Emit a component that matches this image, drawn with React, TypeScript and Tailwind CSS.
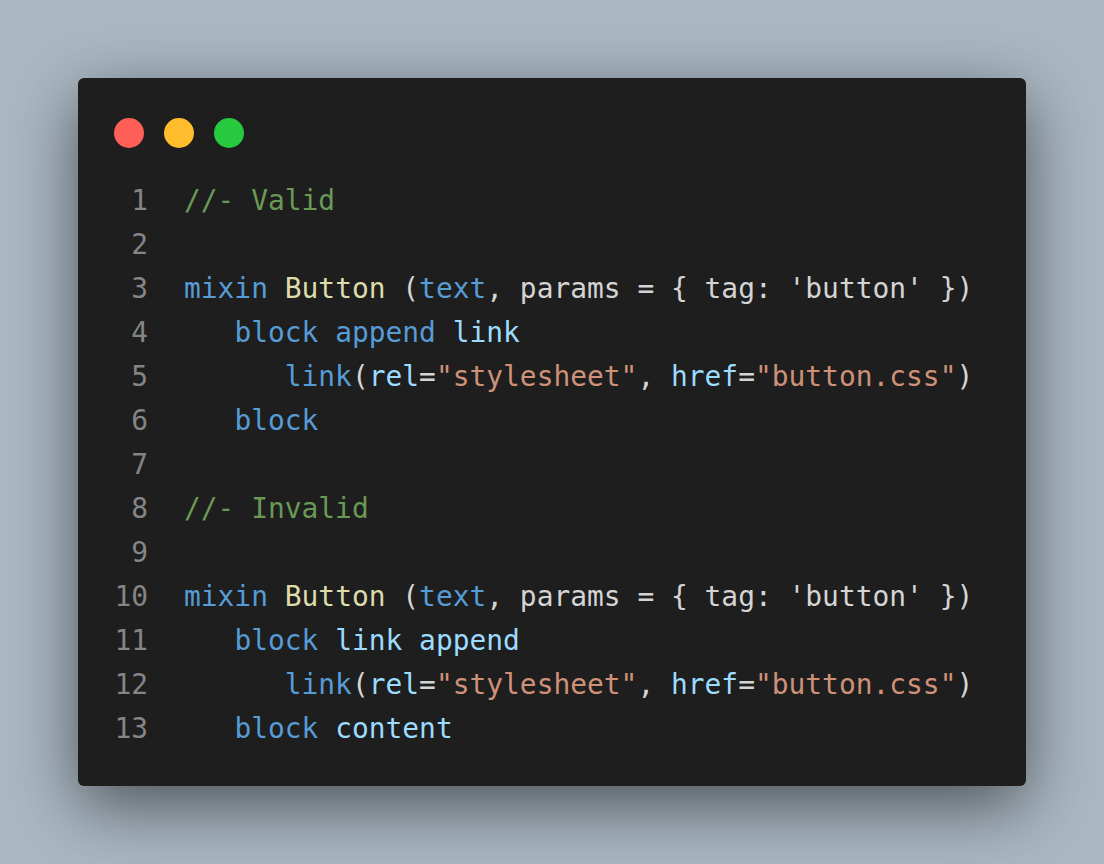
import React from "react";

type Tok = [string, string];

const K = "text-[#569cd6]";
const V = "text-[#9cdcfe]";
const F = "text-[#dcdcaa]";
const T = "text-[#d4d4d4]";
const S = "text-[#ce9178]";
const C = "text-[#6a9955]";

const lines: Tok[][] = [
  [["//- Valid", C]],
  [],
  [
    ["mixin", K],
    [" ", T],
    ["Button", F],
    [" (", T],
    ["text", K],
    [", params = { tag: 'button' })", T],
  ],
  [
    ["   ", T],
    ["block", K],
    [" ", T],
    ["append", K],
    [" ", T],
    ["link", V],
  ],
  [
    ["      ", T],
    ["link", K],
    ["(", T],
    ["rel", V],
    ["=", T],
    ['"stylesheet"', S],
    [", ", T],
    ["href", V],
    ["=", T],
    ['"button.css"', S],
    [")", T],
  ],
  [
    ["   ", T],
    ["block", K],
  ],
  [],
  [["//- Invalid", C]],
  [],
  [
    ["mixin", K],
    [" ", T],
    ["Button", F],
    [" (", T],
    ["text", K],
    [", params = { tag: 'button' })", T],
  ],
  [
    ["   ", T],
    ["block", K],
    [" ", T],
    ["link", V],
    [" ", T],
    ["append", V],
  ],
  [
    ["      ", T],
    ["link", K],
    ["(", T],
    ["rel", V],
    ["=", T],
    ['"stylesheet"', S],
    [", ", T],
    ["href", V],
    ["=", T],
    ['"button.css"', S],
    [")", T],
  ],
  [
    ["   ", T],
    ["block", K],
    [" ", T],
    ["content", V],
  ],
];

export default function App() {
  return (
    <div className="w-[1104px] h-[864px] bg-[#abb8c3] flex items-start justify-center pt-[78px]">
      <div className="w-[948px] h-[708px] bg-[#1e1e1e] rounded-[6px] shadow-[0_20px_68px_rgba(0,0,0,0.55)] pt-[40px] px-[36px]">
        <div className="flex gap-[20px] mb-[31px]">
          <div className="w-[30px] h-[30px] rounded-full bg-[#ff5f56]" />
          <div className="w-[30px] h-[30px] rounded-full bg-[#ffbd2e]" />
          <div className="w-[30px] h-[30px] rounded-full bg-[#27c93f]" />
        </div>
        <div
          className="text-[27.9px] leading-[44px]"
          style={{ fontFamily: '"DejaVu Sans Mono", "Liberation Mono", monospace' }}
        >
          {lines.map((toks, i) => (
            <div key={i} className="flex h-[44px]">
              <div className="w-[34px] text-right text-[#858585] shrink-0">{i + 1}</div>
              <div className="ml-[36px] whitespace-pre">
                {toks.map(([t, c], j) => (
                  <span key={j} className={c}>
                    {t}
                  </span>
                ))}
              </div>
            </div>
          ))}
        </div>
      </div>
    </div>
  );
}
